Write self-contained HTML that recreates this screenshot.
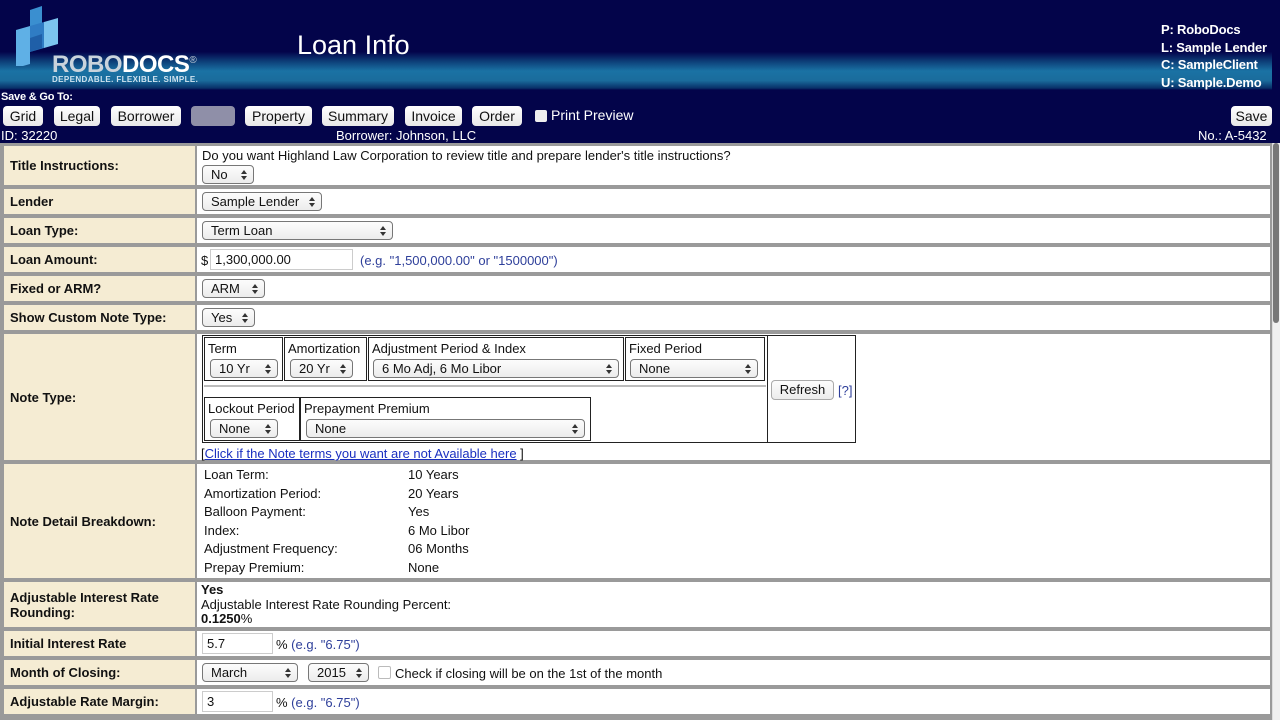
<!DOCTYPE html>
<html><head><meta charset="utf-8"><style>
*{box-sizing:border-box;margin:0;padding:0}
body{width:1280px;height:720px;overflow:hidden;background:#fff;font-family:"Liberation Sans",Arial,sans-serif;font-size:13px;color:#111;position:relative}
.a{position:absolute}
#hdr{left:0;top:0;width:1280px;height:143px;background:#03044a}
#band{left:0;top:52px;width:1280px;height:38px;background:linear-gradient(#03054c 0%,#0d3f78 25%,#1a72a4 50%,#1a6c9c 75%,#083068 95%,#03044a 100%)}
.nb{top:106px;height:20px;background:linear-gradient(#fff,#e8e8e8);border-radius:4px;font-size:14px;color:#111;text-align:center;line-height:20px}
.w{color:#fff;font-weight:bold;font-size:13px;letter-spacing:-0.2px}
.row{left:2px;width:1270px;background:#9a9a9a}
.lab{position:absolute;left:2px;top:2px;bottom:2px;width:191px;background:#f5ecd3;font-weight:bold;font-size:13px;padding-left:6px;display:flex;align-items:center}
.val{position:absolute;left:195px;top:2px;bottom:2px;right:2px;background:#fff;padding-left:5px}
.sel{position:absolute;height:19px;border:1px solid #777;border-radius:4px;background:linear-gradient(#fcfcfc,#ececec);font-size:13px;line-height:17px;padding-left:8px}
.sel:after{content:"";position:absolute;right:6px;top:4px;width:0;height:0;border-left:3px solid transparent;border-right:3px solid transparent;border-bottom:4px solid #333}
.sel:before{content:"";position:absolute;right:6px;top:10px;width:0;height:0;border-left:3px solid transparent;border-right:3px solid transparent;border-top:4px solid #333}
.btn{position:absolute;height:20px;border:1px solid #aaa;border-radius:4px;background:linear-gradient(#fcfcfc,#ececec);font-size:13px;line-height:18px;text-align:center}
.inp{position:absolute;height:21px;border:1px solid #ccc;background:#fff;font-size:13px;line-height:19px;padding-left:4px}
.hint{color:#2e3f9a}
.box{position:absolute;border:1px solid #222;background:#fff}
</style></head><body>
<div class="a" id="hdr"></div>
<div class="a" id="band"></div>
<svg class="a" style="left:12px;top:4px" width="50" height="62" viewBox="0 0 50 62">
<polygon points="18,6 30,2 30,30 18,34" fill="#3a8fd0"/>
<polygon points="4,26 18,22 18,60 4,64" fill="#5fb0e6"/>
<polygon points="18,22 32,18 32,44 18,48" fill="#2f7cc4"/>
<polygon points="32,18 46,14 46,40 32,44" fill="#7cc4ee"/>
<polygon points="18,34 30,30 30,44 18,48" fill="#1f5fa8"/>
</svg>
<div class="a" style="left:52px;top:51px;font-size:24px;font-weight:bold;color:#c9d3dc;letter-spacing:-0.5px">ROBO<span style="color:#fff">DOCS</span><sup style="font-size:10px;font-weight:normal">®</sup></div>
<div class="a" style="left:52px;top:75px;font-size:8px;font-weight:bold;color:#cfe3f0;letter-spacing:0.4px">DEPENDABLE. FLEXIBLE. SIMPLE.</div>
<div class="a" style="left:297px;top:30px;font-size:27px;color:#fff">Loan Info</div>
<div class="a w" style="left:1161px;top:21px;line-height:17.5px;white-space:nowrap">P: RoboDocs<br>L: Sample Lender<br>C: SampleClient<br>U: Sample.Demo</div>
<div class="a w" style="left:1px;top:91px;font-size:11px">Save &amp; Go To:</div>
<div class="a nb" style="left:3px;width:40px">Grid</div>
<div class="a nb" style="left:54px;width:46px">Legal</div>
<div class="a nb" style="left:111px;width:70px">Borrower</div>
<div class="a nb" style="left:191px;width:44px;background:#8f8fa8"></div>
<div class="a nb" style="left:245px;width:67px">Property</div>
<div class="a nb" style="left:322px;width:72px">Summary</div>
<div class="a nb" style="left:405px;width:57px">Invoice</div>
<div class="a nb" style="left:472px;width:50px">Order</div>
<div class="a" style="left:535px;top:110px;width:12px;height:12px;background:#eee;border-radius:2px"></div>
<div class="a" style="left:551px;top:107px;color:#fff;font-size:14px">Print Preview</div>
<div class="a nb" style="left:1231px;width:41px">Save</div>
<div class="a" style="left:1px;top:128px;color:#fff;font-size:13px">ID: 32220</div>
<div class="a" style="left:336px;top:128px;color:#fff;font-size:13px">Borrower: Johnson, LLC</div>
<div class="a" style="left:1198px;top:128px;color:#fff;font-size:13px">No.: A-5432</div>
<div class="a" style="left:0;top:143px;width:1272px;height:577px;background:#9a9a9a"></div>

<div class="a row" style="top:144px;height:43px"><div class="lab">Title Instructions:</div><div class="val"><div style="margin-top:2px">Do you want Highland Law Corporation to review title and prepare lender's title instructions?</div><div class="sel" style="left:5px;top:19px;width:52px">No</div></div></div>
<div class="a row" style="top:187px;height:29px"><div class="lab">Lender</div><div class="val"><div class="sel" style="left:5px;top:3px;width:120px">Sample Lender</div></div></div>
<div class="a row" style="top:216px;height:29px"><div class="lab">Loan Type:</div><div class="val"><div class="sel" style="left:5px;top:3px;width:191px">Term Loan</div></div></div>
<div class="a row" style="top:245px;height:29px"><div class="lab">Loan Amount:</div><div class="val"><span class="a" style="left:4px;top:6px">$</span><div class="inp" style="left:13px;top:2px;width:143px">1,300,000.00</div><span class="a hint" style="left:163px;top:6px">(e.g. "1,500,000.00" or "1500000")</span></div></div>
<div class="a row" style="top:274px;height:29px"><div class="lab">Fixed or ARM?</div><div class="val"><div class="sel" style="left:5px;top:3px;width:63px">ARM</div></div></div>
<div class="a row" style="top:303px;height:29px"><div class="lab">Show Custom Note Type:</div><div class="val"><div class="sel" style="left:5px;top:3px;width:53px">Yes</div></div></div>
<div class="a row" style="top:332px;height:130px"><div class="lab">Note Type:</div><div class="val">
 <div class="box" style="left:5px;top:1px;width:566px;height:108px"></div>
 <div class="box" style="left:570px;top:1px;width:89px;height:108px"></div>
 <div class="box" style="left:7px;top:3px;width:79px;height:44px"><span class="a" style="left:3px;top:3px">Term</span><div class="sel" style="left:5px;top:21px;width:68px">10 Yr</div></div>
 <div class="box" style="left:87px;top:3px;width:83px;height:44px"><span class="a" style="left:3px;top:3px">Amortization</span><div class="sel" style="left:5px;top:21px;width:63px">20 Yr</div></div>
 <div class="box" style="left:171px;top:3px;width:256px;height:44px"><span class="a" style="left:3px;top:3px">Adjustment Period &amp; Index</span><div class="sel" style="left:4px;top:21px;width:246px">6 Mo Adj, 6 Mo Libor</div></div>
 <div class="box" style="left:428px;top:3px;width:140px;height:44px"><span class="a" style="left:3px;top:3px">Fixed Period</span><div class="sel" style="left:4px;top:21px;width:128px">None</div></div>
 <div class="a" style="left:7px;top:51px;width:562px;height:2px;background:#bbb"></div>
 <div class="box" style="left:7px;top:63px;width:96px;height:44px"><span class="a" style="left:3px;top:3px">Lockout Period</span><div class="sel" style="left:5px;top:21px;width:68px">None</div></div>
 <div class="box" style="left:103px;top:63px;width:291px;height:44px"><span class="a" style="left:3px;top:3px">Prepayment Premium</span><div class="sel" style="left:5px;top:21px;width:279px">None</div></div>
 <div class="btn" style="left:574px;top:46px;width:63px">Refresh</div>
 <span class="a hint" style="left:641px;top:49px">[?]</span>
 <span class="a" style="left:4px;top:112px">[<span style="color:#1a2fc0;text-decoration:underline">Click if the Note terms you want are not Available here</span> ]</span>
</div></div>
<div class="a row" style="top:462px;height:118px"><div class="lab">Note Detail Breakdown:</div><div class="val" style="line-height:18.5px">
 <div class="a" style="left:7px;top:2px">Loan Term:<br>Amortization Period:<br>Balloon Payment:<br>Index:<br>Adjustment Frequency:<br>Prepay Premium:</div>
 <div class="a" style="left:211px;top:2px">10 Years<br>20 Years<br>Yes<br>6 Mo Libor<br>06 Months<br>None</div>
</div></div>
<div class="a row" style="top:580px;height:49px"><div class="lab" style="line-height:15px">Adjustable Interest Rate<br>Rounding:</div><div class="val" style="line-height:14.5px;padding-top:1px;padding-left:4px"><b>Yes</b><br>Adjustable Interest Rate Rounding Percent:<br><b>0.1250</b>%</div></div>
<div class="a row" style="top:629px;height:29px"><div class="lab">Initial Interest Rate</div><div class="val"><div class="inp" style="left:5px;top:2px;width:71px">5.7</div><span class="a" style="left:79px;top:6px">% <span class="hint">(e.g. "6.75")</span></span></div></div>
<div class="a row" style="top:658px;height:29px"><div class="lab">Month of Closing:</div><div class="val"><div class="sel" style="left:5px;top:3px;width:96px">March</div><div class="sel" style="left:111px;top:3px;width:61px">2015</div><div class="a" style="left:181px;top:6px;width:13px;height:13px;border:1px solid #bbb;border-radius:2px"></div><span class="a" style="left:198px;top:6px">Check if closing will be on the 1st of the month</span></div></div>
<div class="a row" style="top:687px;height:29px"><div class="lab">Adjustable Rate Margin:</div><div class="val"><div class="inp" style="left:5px;top:2px;width:71px">3</div><span class="a" style="left:79px;top:6px">% <span class="hint">(e.g. "6.75")</span></span></div></div>
<div class="a" style="left:1272px;top:0;width:8px;height:143px;background:#03044a"></div>
<div class="a" style="left:1272px;top:143px;width:8px;height:577px;background:#f0f0f0;border-left:1px solid #ddd"></div>
<div class="a" style="left:1273px;top:143px;width:6px;height:180px;background:#777;border-radius:3px"></div>
</body></html>
